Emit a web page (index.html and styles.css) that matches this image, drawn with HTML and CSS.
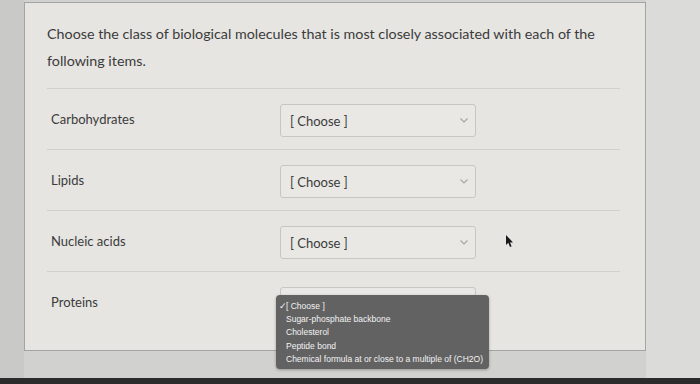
FILE: index.html
```
<!DOCTYPE html>
<html>
	<head>
		<meta charset="UTF-8">
		<title>Matching question</title>
		<link rel="stylesheet" href="styles.css">
	</head>
	<body>
		<div class="screen">
			<div class="strip"></div>
			<div class="main">
				<div class="panel">
					<p class="question">Choose the class of biological molecules that is most closely associated with each of the following items.</p>
					<div class="row">
						<div class="label">Carbohydrates</div>
						<div class="select"><span>[ Choose ]</span><svg class="chev" width="8" height="5" viewBox="0 0 8 5"><path d="M0.5 0.5 L4 4 L7.5 0.5" fill="none" stroke="#a5a5a5" stroke-width="1.1"/></svg></div>
					</div>
					<div class="row">
						<div class="label">Lipids</div>
						<div class="select"><span>[ Choose ]</span><svg class="chev" width="8" height="5" viewBox="0 0 8 5"><path d="M0.5 0.5 L4 4 L7.5 0.5" fill="none" stroke="#a5a5a5" stroke-width="1.1"/></svg></div>
					</div>
					<div class="row">
						<div class="label">Nucleic acids</div>
						<div class="select"><span>[ Choose ]</span><svg class="chev" width="8" height="5" viewBox="0 0 8 5"><path d="M0.5 0.5 L4 4 L7.5 0.5" fill="none" stroke="#a5a5a5" stroke-width="1.1"/></svg></div>
						<svg class="cursor" width="9" height="13" viewBox="0 0 9 13"><path d="M1 0 L1 10 L3.3 7.8 L5 12 L6.6 11.3 L5 7.4 L8 7.4 Z" fill="#1a1a1a"/></svg>
					</div>
					<div class="row last">
						<div class="label">Proteins</div>
						<div class="select open">
							<ul class="menu">
								<li><i>✓</i>[ Choose ]</li>
								<li>Sugar-phosphate backbone</li>
								<li>Cholesterol</li>
								<li>Peptide bond</li>
								<li>Chemical formula at or close to a multiple of (CH2O)</li>
							</ul>
						</div>
					</div>
				</div>
			</div>
		</div>
		<div class="bezel"></div>
	</body>
</html>
```
FILE: styles.css
```
*{
	margin: 0;
	padding: 0;
}
body{
	background: #2b2b2b;
	font-family: Lato, "Open Sans", sans-serif;
	color: #3b3b3b;
}
.screen{
	display: flex;
	height: 378px;
	background: #dbdbd9;
	position: relative;
}
.strip{
	width: 24px;
	background: #c9c9c7;
}
.main{
	width: 622px;
	background: #d1d1cf;
}
.panel{
	margin-top: 2px;
	background: #e6e5e1;
	border: 1px solid #a4a4a2;
	padding: 17px 25px 18px 22px;
}
.question{
	font-size: 14.3px;
	line-height: 27px;
	padding-bottom: 14px;
	border-bottom: 1px solid #d0d0cd;
}
.row{
	display: flex;
	align-items: center;
	padding: 15px 0 12px 4px;
	border-bottom: 1px solid #d0d0cd;
	position: relative;
}
.row.last{
	border-bottom: none;
}
.label{
	width: 229px;
	font-size: 13px;
	margin-top: -3px;
}
.select{
	width: 196px;
	height: 33px;
	box-sizing: border-box;
	border: 1px solid #c6c6c3;
	border-radius: 3px;
	background: #e9e8e4;
	display: flex;
	align-items: center;
	justify-content: space-between;
	padding: 0 7px 0 9px;
	font-size: 13px;
	position: relative;
}
.chev{
	margin-top: -1px;
}
.cursor{
	position: absolute;
	left: 458px;
	top: 24px;
}
.menu{
	position: absolute;
	left: -5px;
	top: 7px;
	width: 213px;
	background: #626263;
	border-radius: 4px;
	list-style: none;
	padding: 5px 0 3px;
	font-family: "Liberation Sans", Arial, sans-serif;
	font-size: 8.5px;
	color: #f2f2f2;
	box-shadow: 0 1px 3px rgba(0,0,0,0.3);
	z-index: 2;
}
.menu li{
	line-height: 13.2px;
	padding-left: 10px;
	position: relative;
}
.menu li i{
	position: absolute;
	left: 3px;
	font-style: normal;
}
.bezel{
	height: 6px;
	background: #2b2b2b;
}
```
